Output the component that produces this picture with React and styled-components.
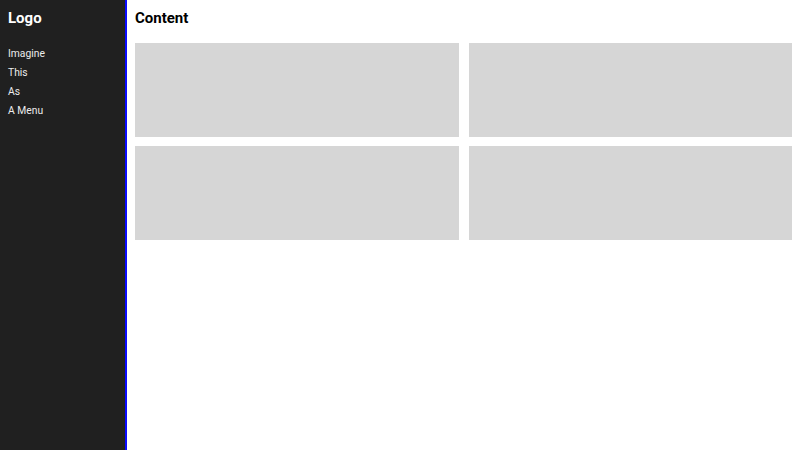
import React from "react";
import styled, { createGlobalStyle } from "styled-components";

const Global = createGlobalStyle`
  html, body { margin: 0; padding: 0; background: #ffffff; }
  body { font-family: Roboto, "Liberation Sans", sans-serif; }
  * { box-sizing: border-box; }
`;

const Layout = styled.div`
  display: flex;
  height: 100vh;
  width: 100vw;
`;

const Sidebar = styled.aside`
  width: 127px;
  flex-shrink: 0;
  background: #202020;
  border-right: 2px solid #0a0aff;
  padding: 8px;
  display: flex;
  flex-direction: column;
`;

const Heading = styled.div`
  font-size: 15px;
  font-weight: 700;
  line-height: 20px;
  color: ${(p) => (p.$light ? "#ffffff" : "#000000")};
`;

const Menu = styled.nav`
  display: flex;
  flex-direction: column;
  margin-top: 15.5px;
`;

const MenuItem = styled.a`
  font-size: 10.3px;
  line-height: 19.3px;
  color: #ececec;
  text-decoration: none;
`;

const Main = styled.main`
  flex: 1;
  padding: 8px;
  display: flex;
  flex-direction: column;
`;

const Grid = styled.div`
  margin-top: 15px;
  display: grid;
  grid-template-columns: 1fr 1fr;
  grid-auto-rows: 94px;
  gap: 9px 10px;
`;

const Card = styled.div`
  background: #d6d6d6;
`;

export default function App() {
  return (
    <>
      <Global />
      <Layout>
        <Sidebar>
          <Heading $light>Logo</Heading>
          <Menu>
            {["Imagine", "This", "As", "A Menu"].map((t) => (
              <MenuItem key={t}>{t}</MenuItem>
            ))}
          </Menu>
        </Sidebar>
        <Main>
          <Heading>Content</Heading>
          <Grid>
            <Card />
            <Card />
            <Card />
            <Card />
          </Grid>
        </Main>
      </Layout>
    </>
  );
}
